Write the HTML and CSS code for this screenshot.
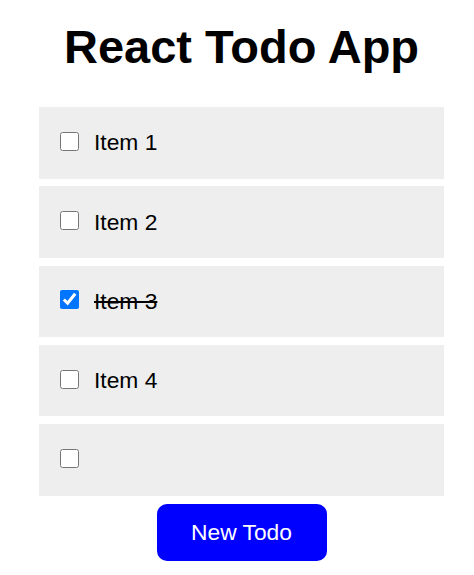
FILE: index.html
```html
<!DOCTYPE html>
<html lang="en">
<head>
<meta charset="utf-8">
<title>React Todo App</title>
<link rel="stylesheet" href="styles.css">
</head>
<body>
<div class="app">
  <h1 class="title">React Todo App</h1>
  <ul class="todo-list">
    <li class="todo"><input type="checkbox" class="todo-check"><span class="todo-text">Item 1</span></li>
    <li class="todo"><input type="checkbox" class="todo-check"><span class="todo-text">Item 2</span></li>
    <li class="todo"><input type="checkbox" class="todo-check" checked><span class="todo-text done">Item 3</span></li>
    <li class="todo"><input type="checkbox" class="todo-check"><span class="todo-text">Item 4</span></li>
    <li class="todo"><input type="checkbox" class="todo-check"><span class="todo-text"></span></li>
  </ul>
  <button class="new-btn" type="button">New Todo</button>
</div>
</body>
</html>
```
FILE: styles.css
```css
html, body {
  margin: 0;
  padding: 0;
  background: #ffffff;
}

body {
  font-family: "Liberation Sans", Arial, sans-serif;
  color: #000000;
}

.app {
  width: 405px;
  margin-left: 39px;
  display: flex;
  flex-direction: column;
}

.title {
  margin: 20px 0 33px;
  font-size: 47px;
  line-height: 54px;
  font-weight: bold;
  text-align: center;
}

.todo-list {
  list-style: none;
  margin: 0;
  padding: 0;
  display: flex;
  flex-direction: column;
  gap: 7.8px;
}

.todo {
  height: 71.5px;
  background: #eeeeee;
  display: flex;
  align-items: center;
  padding-left: 21px;
}

.todo-check {
  width: 19px;
  height: 19px;
  margin: 0 15px 3px 0;
}

.todo-text {
  font-size: 22.8px;
}

.todo-text.done {
  text-decoration: line-through;
}

.new-btn {
  align-self: center;
  margin-top: 8px;
  width: 170px;
  height: 57px;
  border: none;
  border-radius: 10px;
  background: #0000ff;
  color: #ffffff;
  font-family: "Liberation Sans", Arial, sans-serif;
  font-size: 22.8px;
  padding: 0;
}
```
